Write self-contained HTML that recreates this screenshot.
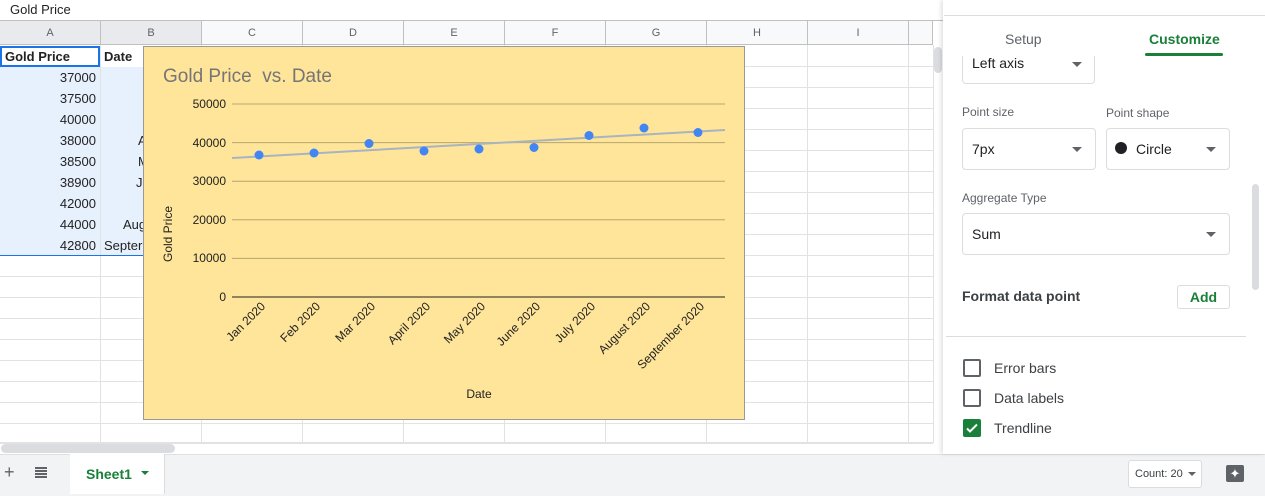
<!DOCTYPE html>
<html><head><style>
*{margin:0;padding:0;box-sizing:border-box}
body{width:1265px;height:496px;overflow:hidden;background:#fff;font-family:"Liberation Sans",Arial,sans-serif;position:relative}
.a{position:absolute}
.hd{position:absolute;top:21px;height:24px;background:#f8f9fa;border-right:1px solid #c0c0c0;border-bottom:1px solid #c0c0c0;font-size:11px;color:#5f6368;text-align:center;line-height:24px}
.vl{position:absolute;top:45px;height:398px;width:1px;background:#e2e2e2}
.hl{position:absolute;left:0;width:933px;height:1px;background:#e2e2e2}
.cell{position:absolute;left:0;width:100px;height:21px;font-size:13px;text-align:right;padding-right:4px;line-height:21px;background:#e7f0fd;color:#222}
.cb{position:absolute;left:101px;width:100px;height:21px;font-size:13px;line-height:21px;background:#e7f0fd;color:#222}
.lab{position:absolute;font-size:12px;color:#5f6368}
.box{position:absolute;border:1px solid #dadce0;border-radius:4px;background:#fff;font-size:14px;color:#202124}
.tri{position:absolute;width:0;height:0;border-left:5px solid transparent;border-right:5px solid transparent;border-top:5px solid #5f6368}
.chk{position:absolute;left:963px;width:18px;height:18px;border:2px solid #5f6368;border-radius:2px}
.ct{position:absolute;left:994px;font-size:14px;color:#3c4043}
</style></head><body>
<div class="a" style="left:10px;top:2px;font-size:13px;color:#222">Gold Price</div>
<div class="a" style="left:0;top:20px;width:943px;height:1px;background:#c0c0c0"></div>
<div class="hd" style="left:0;width:101px;background:#e8eaed">A</div>
<div class="hd" style="left:101px;width:101px;background:#e8eaed">B</div>
<div class="hd" style="left:202px;width:101px">C</div>
<div class="hd" style="left:303px;width:101px">D</div>
<div class="hd" style="left:404px;width:101px">E</div>
<div class="hd" style="left:505px;width:101px">F</div>
<div class="hd" style="left:606px;width:101px">G</div>
<div class="hd" style="left:707px;width:101px">H</div>
<div class="hd" style="left:808px;width:101px">I</div>
<div class="hd" style="left:909px;width:24px"></div>
<div class="vl" style="left:100px"></div><div class="vl" style="left:201px"></div><div class="vl" style="left:302px"></div><div class="vl" style="left:403px"></div><div class="vl" style="left:504px"></div><div class="vl" style="left:605px"></div><div class="vl" style="left:706px"></div><div class="vl" style="left:807px"></div><div class="vl" style="left:908px"></div>
<div class="hl" style="top:66px"></div><div class="hl" style="top:87px"></div><div class="hl" style="top:108px"></div><div class="hl" style="top:129px"></div><div class="hl" style="top:150px"></div><div class="hl" style="top:171px"></div><div class="hl" style="top:192px"></div><div class="hl" style="top:213px"></div><div class="hl" style="top:234px"></div><div class="hl" style="top:255px"></div><div class="hl" style="top:276px"></div><div class="hl" style="top:297px"></div><div class="hl" style="top:318px"></div><div class="hl" style="top:339px"></div><div class="hl" style="top:360px"></div><div class="hl" style="top:381px"></div><div class="hl" style="top:402px"></div><div class="hl" style="top:423px"></div><div class="hl" style="top:442px"></div>
<div class="cell" style="top:46px;text-align:left;padding-left:3px;font-weight:bold;background:#fff;border:2px solid #1a73e8;line-height:17px">Gold Price</div>
<div class="cb" style="top:46px;font-weight:bold;padding-left:3px;background:#fff">Date</div>
<div class="cell" style="top:67px">37000</div><div class="cell" style="top:88px">37500</div><div class="cell" style="top:109px">40000</div><div class="cell" style="top:130px">38000</div><div class="cell" style="top:151px">38500</div><div class="cell" style="top:172px">38900</div><div class="cell" style="top:193px">42000</div><div class="cell" style="top:214px">44000</div><div class="cell" style="top:235px">42800</div>
<div class="cb" style="top:67px"></div><div class="cb" style="top:88px"></div><div class="cb" style="top:109px"></div>
<div class="cb" style="top:130px;padding-left:37px">A</div><div class="cb" style="top:151px;padding-left:37px">M</div><div class="cb" style="top:172px;padding-left:35px">J</div><div class="cb" style="top:193px"></div><div class="cb" style="top:214px;padding-left:22px">Aug</div><div class="cb" style="top:235px;padding-left:3px">Septer</div>
<div class="a" style="left:0;top:255px;width:201px;height:1px;background:#1a73e8"></div>
<!-- chart -->
<svg class="a" style="left:143px;top:46px" width="602" height="374" viewBox="143 46 602 374">
<rect x="143.5" y="46.5" width="601" height="373" fill="#ffe599" stroke="#999"/>
<text x="163" y="82" font-size="19" fill="#757575" font-family="Liberation Sans" xml:space="preserve" style="white-space:pre">Gold Price  vs. Date</text>
<g stroke="#b7a66c" stroke-width="1">
<line x1="232" y1="104" x2="725" y2="104"/><line x1="232" y1="142.6" x2="725" y2="142.6"/><line x1="232" y1="181.2" x2="725" y2="181.2"/><line x1="232" y1="219.8" x2="725" y2="219.8"/><line x1="232" y1="258.4" x2="725" y2="258.4"/></g>
<line x1="232" y1="297" x2="725" y2="297" stroke="#222"/>
<g font-size="12" fill="#222" text-anchor="end" font-family="Liberation Sans">
<text x="226" y="108">50000</text><text x="226" y="147">40000</text><text x="226" y="185">30000</text><text x="226" y="224">20000</text><text x="226" y="262">10000</text><text x="226" y="301">0</text></g>
<text transform="translate(172,234) rotate(-90)" font-size="12" text-anchor="middle" fill="#222">Gold Price</text>
<line x1="232" y1="158" x2="725" y2="130" stroke="#a8b4bf" stroke-width="2"/>
<g fill="#4285f4">
<circle cx="259" cy="155" r="4.5"/><circle cx="314" cy="153" r="4.5"/><circle cx="369" cy="143.5" r="4.5"/><circle cx="424" cy="151" r="4.5"/><circle cx="479" cy="149" r="4.5"/><circle cx="534" cy="147.5" r="4.5"/><circle cx="589" cy="135.5" r="4.5"/><circle cx="644" cy="128" r="4.5"/><circle cx="698" cy="132.5" r="4.5"/></g>
<g font-size="12" fill="#222" text-anchor="end" font-family="Liberation Sans">
<text transform="translate(266,307) rotate(-45)">Jan 2020</text>
<text transform="translate(321,307) rotate(-45)">Feb 2020</text>
<text transform="translate(376,307) rotate(-45)">Mar 2020</text>
<text transform="translate(431,307) rotate(-45)">April 2020</text>
<text transform="translate(486,307) rotate(-45)">May 2020</text>
<text transform="translate(541,307) rotate(-45)">June 2020</text>
<text transform="translate(596,307) rotate(-45)">July 2020</text>
<text transform="translate(651,307) rotate(-45)">August 2020</text>
<text transform="translate(705,307) rotate(-45)">September 2020</text></g>
<text x="479" y="398" font-size="12" text-anchor="middle" fill="#222">Date</text>
</svg>
<!-- scrollbars -->
<div class="a" style="left:933px;top:45px;width:10px;height:398px;background:#fff;border-left:1px solid #e2e2e2"></div>
<div class="a" style="left:934px;top:47px;width:8px;height:26px;background:#dadce0;border-radius:4px"></div>
<div class="a" style="left:0;top:443px;width:933px;height:11px;background:#fff;border-top:1px solid #e2e2e2"></div>
<div class="a" style="left:1px;top:444px;width:174px;height:9px;background:#dadce0;border-radius:5px"></div>
<!-- bottom bar -->
<div class="a" style="left:0;top:454px;width:1265px;height:42px;background:#f1f3f4;border-top:1px solid #e0e0e0"></div>
<div class="a" style="left:4px;top:462px;font-size:18px;color:#5f6368">+</div>
<div class="a" style="left:35px;top:467px;width:12px;height:2px;background:#5f6368;box-shadow:0 3px 0 #5f6368,0 6px 0 #5f6368,0 9px 0 #5f6368"></div>
<div class="a" style="left:70px;top:454px;width:95px;height:40px;background:#fff;border-right:1px solid #dadce0"></div>
<div class="a" style="left:86px;top:466px;font-size:14px;color:#188038;font-weight:bold">Sheet1</div>
<div class="tri" style="left:141px;top:471px;border-top-color:#188038;border-width:4px 4px 0"></div>
<div class="a" style="left:1128px;top:460px;width:74px;height:28px;background:#fff;border:1px solid #dadce0;border-radius:3px;font-size:11px;color:#3c4043;line-height:26px;padding-left:6px">Count: 20</div>
<div class="tri" style="left:1188px;top:472px;border-width:4px 4px 0"></div>
<div class="a" style="left:1226px;top:465px;width:18px;height:17px;background:#5f6368;border-radius:2px;color:#fff;font-size:13px;text-align:center;line-height:17px">✦</div>
<!-- side panel -->
<div class="a" style="left:943px;top:0;width:322px;height:454px;background:#fff;box-shadow:-2px 0 4px rgba(0,0,0,.12)"></div>
<div class="a" style="left:944px;top:15px;width:321px;height:1px;background:#dadce0"></div>
<div class="a" style="left:1005px;top:31px;font-size:14px;color:#5f6368">Setup</div>
<div class="a" style="left:1149px;top:31px;font-size:14px;color:#188038;font-weight:bold">Customize</div>
<div class="a" style="left:1145px;top:53px;width:78px;height:3px;background:#188038;border-radius:2px"></div>
<div class="box" style="left:962px;top:56px;width:133px;height:28px;border-top:none;border-radius:0 0 4px 4px;line-height:14px;padding-left:9px">Left axis</div>
<div class="tri" style="left:1072px;top:62px"></div>
<div class="lab" style="left:962px;top:105px">Point size</div>
<div class="lab" style="left:1106px;top:106px">Point shape</div>
<div class="box" style="left:962px;top:128px;width:134px;height:42px;line-height:40px;padding-left:9px">7px</div>
<div class="tri" style="left:1072px;top:147px"></div>
<div class="box" style="left:1106px;top:128px;width:124px;height:42px;line-height:40px;padding-left:29px">Circle</div>
<div class="a" style="left:1115px;top:142px;width:12px;height:12px;border-radius:50%;background:#202124"></div>
<div class="tri" style="left:1206px;top:147px"></div>
<div class="lab" style="left:962px;top:191px">Aggregate Type</div>
<div class="box" style="left:962px;top:213px;width:268px;height:42px;line-height:40px;padding-left:9px">Sum</div>
<div class="tri" style="left:1206px;top:232px"></div>
<div class="a" style="left:962px;top:288px;font-size:14px;font-weight:bold;color:#3c4043">Format data point</div>
<div class="a" style="left:1177px;top:285px;width:53px;height:24px;border:1px solid #dadce0;border-radius:3px;text-align:center;line-height:22px;font-size:14px;color:#188038;font-weight:bold">Add</div>
<div class="a" style="left:946px;top:336px;width:300px;height:1px;background:#dadce0"></div>
<div class="chk" style="top:359px"></div><div class="ct" style="top:360px">Error bars</div>
<div class="chk" style="top:389px"></div><div class="ct" style="top:390px">Data labels</div>
<div class="chk" style="top:419px;background:#188038;border-color:#188038"><svg width="14" height="14" viewBox="0 0 14 14" style="position:absolute;left:0;top:0"><path d="M2 7.5l3 3 7-7" stroke="#fff" stroke-width="2" fill="none"/></svg></div><div class="ct" style="top:420px">Trendline</div>
<div class="a" style="left:1252px;top:184px;width:7px;height:106px;background:#dadce0;border-radius:4px"></div>
</body></html>
